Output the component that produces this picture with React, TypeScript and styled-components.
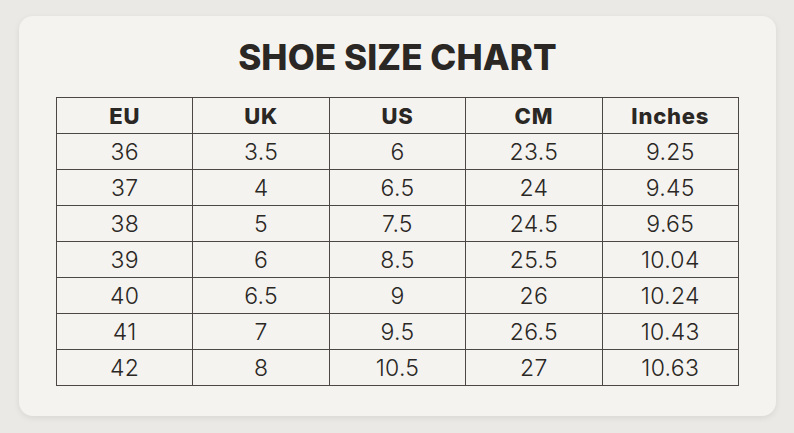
import React from "react";
import styled, { createGlobalStyle } from "styled-components";

const Global = createGlobalStyle`
  html, body { margin: 0; padding: 0; }
  body {
    width: 794px; height: 433px; overflow: hidden;
    background: #ebe9e5;
    font-family: "Inter", "Open Sans", sans-serif;
  }
`;

const Page = styled.div`
  box-sizing: border-box;
  width: 794px;
  height: 433px;
  padding: 16px 18px 17px 19px;
  display: flex;
`;

const Card = styled.div`
  flex: 1;
  background: #f4f3f0;
  border-radius: 14px;
  box-shadow: 0 2px 6px rgba(0, 0, 0, 0.08);
  display: flex;
  flex-direction: column;
  align-items: center;
  padding: 20px 37px 0 37px;
`;

const Title = styled.h1`
  margin: 0;
  font-family: "Inter", sans-serif;
  font-weight: 800;
  font-size: 35px;
  line-height: 42px;
  letter-spacing: 0.1px;
  color: #2a2724;
`;

const Table = styled.table`
  margin-top: 19px;
  width: 683px;
  border-collapse: collapse;
  table-layout: fixed;
  color: #2a2724;
`;

const Th = styled.th`
  border: 1.5px solid #4a4744;
  height: 35px;
  padding: 0;
  font-family: "Inter", sans-serif;
  font-weight: 800;
  font-size: 22px;
  letter-spacing: 0.8px;
  text-align: center;
`;

const Td = styled.td`
  border: 1.5px solid #4a4744;
  height: 35px;
  padding: 0;
  font-family: "Inter", sans-serif;
  font-weight: 300;
  font-size: 23px;
  letter-spacing: 0.3px;
  text-align: center;
`;

const headers = ["EU", "UK", "US", "CM", "Inches"];
const rows = [
  ["36", "3.5", "6", "23.5", "9.25"],
  ["37", "4", "6.5", "24", "9.45"],
  ["38", "5", "7.5", "24.5", "9.65"],
  ["39", "6", "8.5", "25.5", "10.04"],
  ["40", "6.5", "9", "26", "10.24"],
  ["41", "7", "9.5", "26.5", "10.43"],
  ["42", "8", "10.5", "27", "10.63"],
];

export default function App() {
  return (
    <>
      <Global />
      <Page>
        <Card>
          <Title>SHOE SIZE CHART</Title>
          <Table>
            <thead>
              <tr>
                {headers.map((h) => (
                  <Th key={h}>{h}</Th>
                ))}
              </tr>
            </thead>
            <tbody>
              {rows.map((r, i) => (
                <tr key={i}>
                  {r.map((c, j) => (
                    <Td key={j}>{c}</Td>
                  ))}
                </tr>
              ))}
            </tbody>
          </Table>
        </Card>
      </Page>
    </>
  );
}
